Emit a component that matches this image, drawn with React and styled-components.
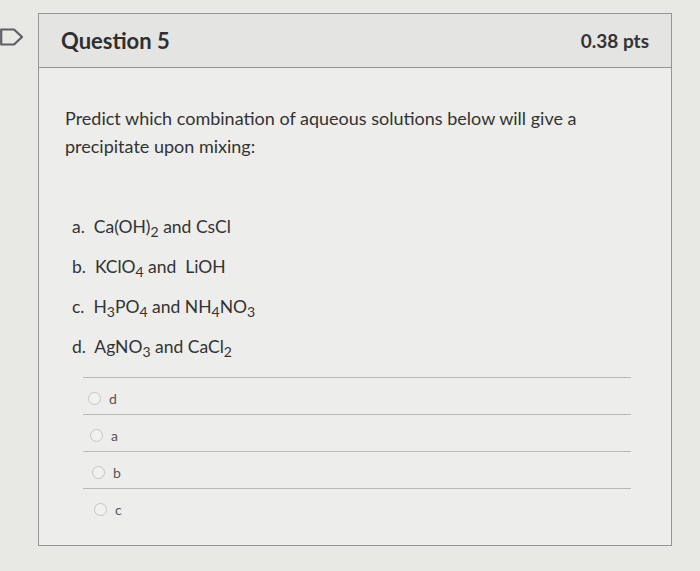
import React from "react";
import styled, { createGlobalStyle } from "styled-components";

const GlobalStyle = createGlobalStyle`
  html, body {
    margin: 0;
    padding: 0;
    background: #e8e8e5;
    font-family: Lato, "Open Sans", sans-serif;
  }
`;

const Page = styled.div`
  display: flex;
  align-items: flex-start;
  padding-top: 13px;
  height: 558px;
`;

const Marker = styled.div`
  width: 38px;
  flex-shrink: 0;
  padding-top: 15px;
  display: flex;
`;

const Card = styled.div`
  width: 634px;
  background: #ededeb;
  border: 1px solid #959593;
  box-sizing: border-box;
  padding-bottom: 20px;
`;

const Header = styled.div`
  display: flex;
  align-items: center;
  justify-content: space-between;
  height: 53px;
  padding: 0 22px;
  background: #e4e4e2;
  border-bottom: 1px solid #959593;
`;

const Title = styled.h2`
  margin: 0;
  font-size: 22px;
  font-weight: 700;
  color: #2f2f2f;
`;

const Points = styled.span`
  font-size: 19px;
  font-weight: 700;
  color: #333;
`;

const Body = styled.div`
  padding: 36px 20px 0 26px;
`;

const Prompt = styled.p`
  margin: 0;
  font-size: 18px;
  line-height: 28px;
  color: #333;
`;

const Options = styled.div`
  margin-top: 47px;
  padding-left: 7px;
`;

const Option = styled.div`
  height: 40px;
  line-height: 40px;
  font-size: 17.5px;
  color: #333;

  sub {
    font-size: 14px;
    vertical-align: -4px;
    line-height: 0;
  }
`;

const Answers = styled.div`
  margin: 10px 40px 0 44px;
`;

const AnswerRow = styled.label`
  display: flex;
  align-items: center;
  gap: 8px;
  height: 37px;
  padding: 4px 0 0 ${(p) => p.$indent}px;
  box-sizing: border-box;
  border-top: 1px solid #b9b9b7;
  font-size: 14px;
  color: #555;
`;

const Radio = styled.span`
  width: 11px;
  height: 11px;
  border-radius: 50%;
  border: 1.5px solid #c4c4c2;
  background: #f1f1ef;
`;

const answers = ["d", "a", "b", "c"];

export default function App() {
  return (
    <>
      <GlobalStyle />
      <Page>
        <Marker>
          <svg width="24" height="18" viewBox="0 0 24 18">
            <path d="M1.2 1.5 H14 L22 9 L14 16.5 H1.2 Z" fill="none" stroke="#5e5e66" strokeWidth="2.2" strokeLinejoin="round" />
          </svg>
        </Marker>
        <Card>
          <Header>
            <Title>Question 5</Title>
            <Points>0.38 pts</Points>
          </Header>
          <Body>
            <Prompt>
              Predict which combination of aqueous solutions below will give a
              <br />
              precipitate upon mixing:
            </Prompt>
            <Options>
              <Option>a.&nbsp; Ca(OH)<sub>2</sub> and CsCl</Option>
              <Option>b.&nbsp; KClO<sub>4</sub> and&nbsp; LiOH</Option>
              <Option>c.&nbsp; H<sub>3</sub>PO<sub>4</sub> and NH<sub>4</sub>NO<sub>3</sub></Option>
              <Option>d.&nbsp; AgNO<sub>3</sub> and CaCl<sub>2</sub></Option>
            </Options>
          </Body>
          <Answers>
            {answers.map((a, i) => (
              <AnswerRow key={a} $indent={5 + i * 2}>
                <Radio />
                {a}
              </AnswerRow>
            ))}
          </Answers>
        </Card>
      </Page>
    </>
  );
}
